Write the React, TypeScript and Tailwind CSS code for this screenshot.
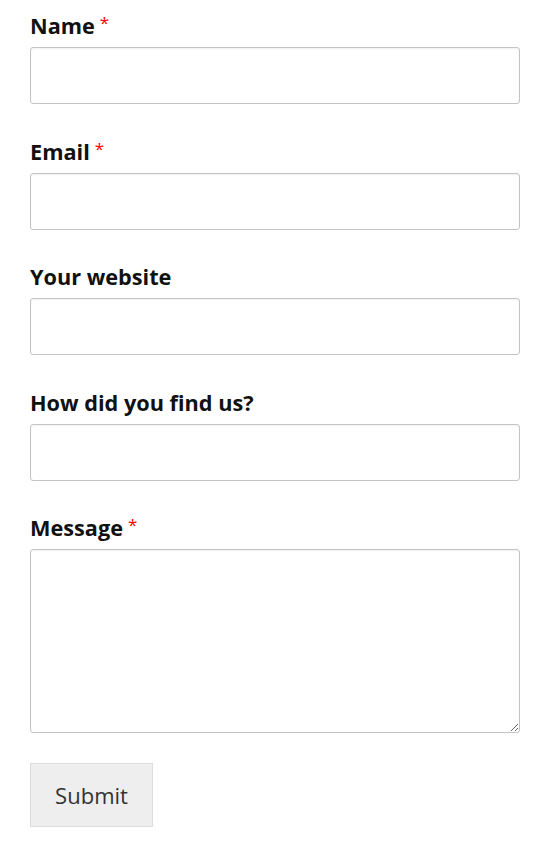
const fields: { label: string; required?: boolean; multiline?: boolean }[] = [
  { label: "Name", required: true },
  { label: "Email", required: true },
  { label: "Your website" },
  { label: "How did you find us?" },
  { label: "Message", required: true, multiline: true },
];

export default function App() {
  return (
    <div
      className="min-h-screen bg-white px-[30px] pt-[8px] text-[#111]"
      style={{ fontFamily: "'Open Sans', 'Noto Sans', sans-serif" }}
    >
      <form onSubmit={(e) => e.preventDefault()}>
        {fields.map((f) => (
          <div key={f.label} className="mb-[29.5px]">
            <label className="mb-[5px] block pt-[1px] text-[21.7px] font-bold leading-[33px]">
              {f.label}
              {f.required && (
                <span className="ml-[5px] align-top text-[17px] leading-[28px] font-normal text-[#ff0000]">*</span>
              )}
            </label>
            {f.multiline ? (
              <textarea className="block h-[184px] w-full rounded-[3px] border border-[#c4c4c4] shadow-[inset_0_1px_2px_rgba(0,0,0,0.06)] outline-none" />
            ) : (
              <input
                type="text"
                className="block h-[57px] w-full rounded-[3px] border border-[#c4c4c4] shadow-[inset_0_1px_2px_rgba(0,0,0,0.06)] outline-none"
              />
            )}
          </div>
        ))}
        <button
          type="submit"
          className="h-[64px] w-[123px] border border-[#dddddd] bg-[#eeeeee] pt-[2px] text-[22px] text-[#333]"
        >
          Submit
        </button>
      </form>
    </div>
  );
}
